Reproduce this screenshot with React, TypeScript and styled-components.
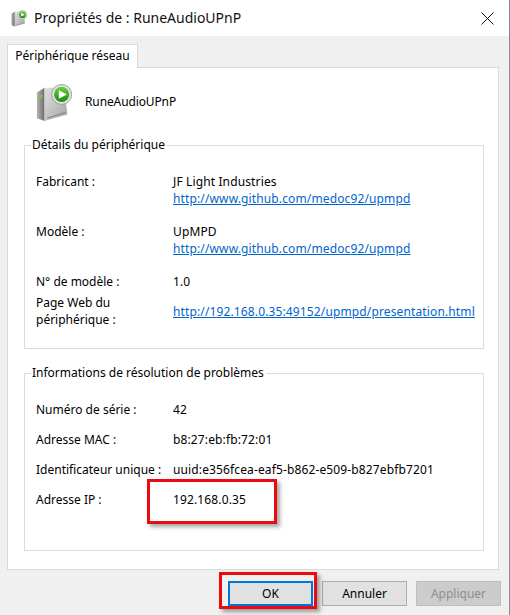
import {FC} from "react";
import styled, {createGlobalStyle} from "styled-components";

const GlobalStyle = createGlobalStyle`
  html, body {
    margin: 0;
    padding: 0;
    background: #fff;
  }
`

const Dialog = styled.div`
  position: relative;
  box-sizing: border-box;
  width: 510px;
  height: 615px;
  display: flex;
  flex-direction: column;
  background: #f0f0f0;
  border-right: 1px solid #8a8a8a;
  font-family: "Noto Sans", "Open Sans", sans-serif;
  font-size: 12px;
  line-height: 16px;
  color: #000;
  overflow: hidden;
`

const TitleBar = styled.div`
  height: 36px;
  flex: none;
  display: flex;
  align-items: center;
  gap: 6px;
  padding: 0 15px 0 11px;
  background: #fff;
`

const TitleText = styled.div`
  flex: 1;
  margin-bottom: 1px;
  font-size: 14px;
  color: #111;
`

const Body = styled.div`
  flex: 1;
  display: flex;
  flex-direction: column;
  padding: 8px 10px 0 7px;
`

const Tab = styled.div`
  box-sizing: border-box;
  width: 131px;
  height: 24px;
  margin-bottom: -1px;
  position: relative;
  z-index: 1;
  padding-top: 3px;
  text-align: center;
  background: #fff;
  border: 1px solid #d9d9d9;
  border-bottom: none;
`

const Panel = styled.div`
  box-sizing: border-box;
  height: 503px;
  display: flex;
  flex-direction: column;
  padding: 15px 14px 0 16px;
  background: #fff;
  border: 1px solid #d9d9d9;
`

const DeviceHeader = styled.div`
  height: 40px;
  display: flex;
  align-items: center;
  gap: 11px;
  padding-left: 12px;
`

const DeviceName = styled.span`
  margin-bottom: 2px;
  letter-spacing: -0.12px;
`

const Group = styled.fieldset<{$height: number; $top: number; $leading: number}>`
  box-sizing: border-box;
  height: ${p => p.$height}px;
  margin: ${p => p.$top}px 0 0;
  padding: 0 0 0 11px;
  border: 1px solid #dcdcdc;
  min-width: 0;
  line-height: ${p => p.$leading}px;
`

const Legend = styled.legend`
  padding: 0 2px 0 1px;
  margin-left: -5px;
  line-height: 16px;
`

const Row = styled.div<{$top: number}>`
  display: grid;
  grid-template-columns: 137px 1fr;
  margin-top: ${p => p.$top}px;
`

const Value = styled.div<{$mid?: boolean}>`
  align-self: ${p => p.$mid ? "center" : "start"};
  white-space: nowrap;
  letter-spacing: 0.13px;
`

const ValueLink = styled.a`
  display: block;
  color: #0066cc;
  text-decoration: underline;
  white-space: nowrap;
`

const Footer = styled.div`
  display: flex;
  justify-content: flex-end;
  gap: 9px;
  padding-top: 11px;
  margin-right: -2px;
`

const DialogButton = styled.button<{$primary?: boolean}>`
  box-sizing: border-box;
  width: 85px;
  height: 25px;
  padding: 0;
  font: inherit;
  color: ${p => p.disabled ? "#8c8c8c" : "#000"};
  background: ${p => p.disabled ? "#cccccc" : "#e1e1e1"};
  border: ${p => p.$primary ? "2px solid #0078d7" : p.disabled ? "1px solid #bfbfbf" : "1px solid #adadad"};
`

const Highlight = styled.div<{$x: number; $y: number; $w: number; $h: number}>`
  position: absolute;
  left: ${p => p.$x}px;
  top: ${p => p.$y}px;
  width: ${p => p.$w}px;
  height: ${p => p.$h}px;
  box-sizing: border-box;
  border: 3px solid #ea0a10;
  box-shadow: 3px 3px 4px rgba(0, 0, 0, 0.35);
  pointer-events: none;
`

const DeviceIcon: FC<{size: number}> = ({size}) => (
    <svg width={size} height={size} viewBox="0 0 40 40">
        <defs>
            <linearGradient id="front" x1="0" y1="0" x2="1" y2="1">
                <stop offset="0" stopColor="#e0e0e0"/>
                <stop offset="1" stopColor="#a4a4a4"/>
            </linearGradient>
            <linearGradient id="side" x1="0" y1="0" x2="1" y2="0">
                <stop offset="0" stopColor="#b5b5b5"/>
                <stop offset="1" stopColor="#6a6a6a"/>
            </linearGradient>
            <linearGradient id="play" x1="0" y1="0" x2="0" y2="1">
                <stop offset="0" stopColor="#6fd03a"/>
                <stop offset="1" stopColor="#178a12"/>
            </linearGradient>
        </defs>
        <path d="M1 9 L9 4 L9 39 L1 36 Z" fill="url(#side)"/>
        <path d="M9 4 L30 4 L33 32 L9 39 Z" fill="url(#front)"/>
        <path d="M3 12 L7 11 L7 15 L3 15 Z" fill="#7bc043"/>
        <path d="M12 36 L31 30" stroke="#777" strokeWidth="1"/>
        <circle cx="27" cy="11" r="10.5" fill="#e2e2e2" stroke="#9a9a9a"/>
        <circle cx="27" cy="11" r="8" fill="url(#play)"/>
        <path d="M24 6.5 L32.5 11 L24 15.5 Z" fill="#fff"/>
    </svg>
);

export default function App() {
    return (
        <Dialog>
            <GlobalStyle/>
            <TitleBar>
                <DeviceIcon size={17}/>
                <TitleText>Propriétés de : RuneAudioUPnP</TitleText>
                <svg width="13" height="13" viewBox="0 0 13 13">
                    <path d="M0.5 0.5 L12.5 12.5 M12.5 0.5 L0.5 12.5" stroke="#111" strokeWidth="1"/>
                </svg>
            </TitleBar>
            <Body>
                <Tab>Périphérique réseau</Tab>
                <Panel>
                    <DeviceHeader>
                        <DeviceIcon size={38}/>
                        <DeviceName>RuneAudioUPnP</DeviceName>
                    </DeviceHeader>
                    <Group $top={14} $height={212} $leading={17}>
                        <Legend>Détails du périphérique</Legend>
                        <Row $top={20}>
                            <span>Fabricant :</span>
                            <Value>
                                JF Light Industries
                                <ValueLink>http://www.github.com/medoc92/upmpd</ValueLink>
                            </Value>
                        </Row>
                        <Row $top={16}>
                            <span>Modèle :</span>
                            <Value>
                                UpMPD
                                <ValueLink>http://www.github.com/medoc92/upmpd</ValueLink>
                            </Value>
                        </Row>
                        <Row $top={16}>
                            <span>N° de modèle :</span>
                            <Value>1.0</Value>
                        </Row>
                        <Row $top={4}>
                            <span>Page Web du<br/>périphérique :</span>
                            <Value $mid><ValueLink>http://192.168.0.35:49152/upmpd/presentation.html</ValueLink></Value>
                        </Row>
                    </Group>
                    <Group $top={16} $height={186} $leading={16}>
                        <Legend>Informations de résolution de problèmes</Legend>
                        <Row $top={21}>
                            <span>Numéro de série :</span>
                            <Value>42</Value>
                        </Row>
                        <Row $top={14}>
                            <span>Adresse MAC :</span>
                            <Value>b8:27:eb:fb:72:01</Value>
                        </Row>
                        <Row $top={14}>
                            <span>Identificateur unique :</span>
                            <Value>uuid:e356fcea-eaf5-b862-e509-b827ebfb7201</Value>
                        </Row>
                        <Row $top={14}>
                            <span>Adresse IP :</span>
                            <Value>192.168.0.35</Value>
                        </Row>
                    </Group>
                </Panel>
                <Footer>
                    <DialogButton $primary>OK</DialogButton>
                    <DialogButton>Annuler</DialogButton>
                    <DialogButton disabled>Appliquer</DialogButton>
                </Footer>
            </Body>
            <Highlight $x={147} $y={479} $w={130} $h={45}/>
            <Highlight $x={219} $y={572} $w={98} $h={37}/>
        </Dialog>
    );
}
